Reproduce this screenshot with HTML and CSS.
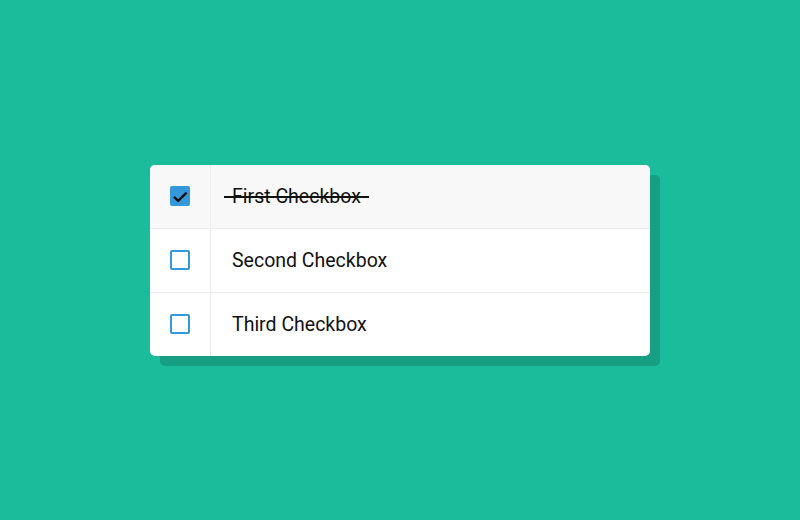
FILE: index.html
```html
<!DOCTYPE html>
<html lang="en">

<head>
    <meta charset="UTF-8">
    <title>Checkboxes</title>
    <link rel="stylesheet" href="styles.css">
</head>

<body>
    <div class="main">
        <ul class="todo-list">
            <li class="todo-item done">
                <div class="todo-check">
                    <span class="box checked">
                        <svg width="16" height="16" viewBox="2 2 16 16">
                            <path d="M4 10.8 L8.2 14.8 L16.6 6.6" fill="none" stroke="#111" stroke-width="2.4" />
                        </svg>
                    </span>
                </div>
                <div class="todo-text"><span>First Checkbox</span></div>
            </li>
            <li class="todo-item">
                <div class="todo-check"><span class="box"></span></div>
                <div class="todo-text"><span>Second Checkbox</span></div>
            </li>
            <li class="todo-item">
                <div class="todo-check"><span class="box"></span></div>
                <div class="todo-text"><span>Third Checkbox</span></div>
            </li>
        </ul>
    </div>
</body>

</html>
```

FILE: styles.css
```css
body {
    margin: 0;
    background-color: #1abc9c;
    font-family: 'Roboto', 'Liberation Sans', sans-serif;
}
.main {
    height: 520px;
    display: flex;
    align-items: center;
    justify-content: center;
}
.todo-list {
    list-style: none;
    margin: 0;
    padding: 0;
    width: 500px;
    background-color: #fff;
    border-radius: 5px;
    box-shadow: 10px 10px 0 #179f84;
    overflow: hidden;
}
.todo-item {
    display: flex;
    height: 63px;
    border-top: 1px solid #ececec;
}
.todo-item:first-child {
    border-top: none;
}
.todo-item.done {
    background-color: #f8f8f8;
}
.todo-check {
    width: 60px;
    flex-shrink: 0;
    display: flex;
    align-items: center;
    justify-content: center;
    border-right: 1px solid #ececec;
}
.box {
    box-sizing: border-box;
    width: 20px;
    height: 20px;
    border: 2px solid #3498db;
    border-radius: 2px;
    display: flex;
    background-color: #fff;
}
.box.checked {
    background-color: #3498db;
}
.box svg {
    display: block;
}
.todo-text {
    display: flex;
    align-items: center;
    padding-left: 21px;
    font-size: 19.5px;
    color: #111;
}
.todo-text span {
    position: relative;
}
.done .todo-text span::after {
    content: '';
    position: absolute;
    left: -8px;
    right: -8px;
    top: 52%;
    height: 2px;
    background-color: #111;
}
```
